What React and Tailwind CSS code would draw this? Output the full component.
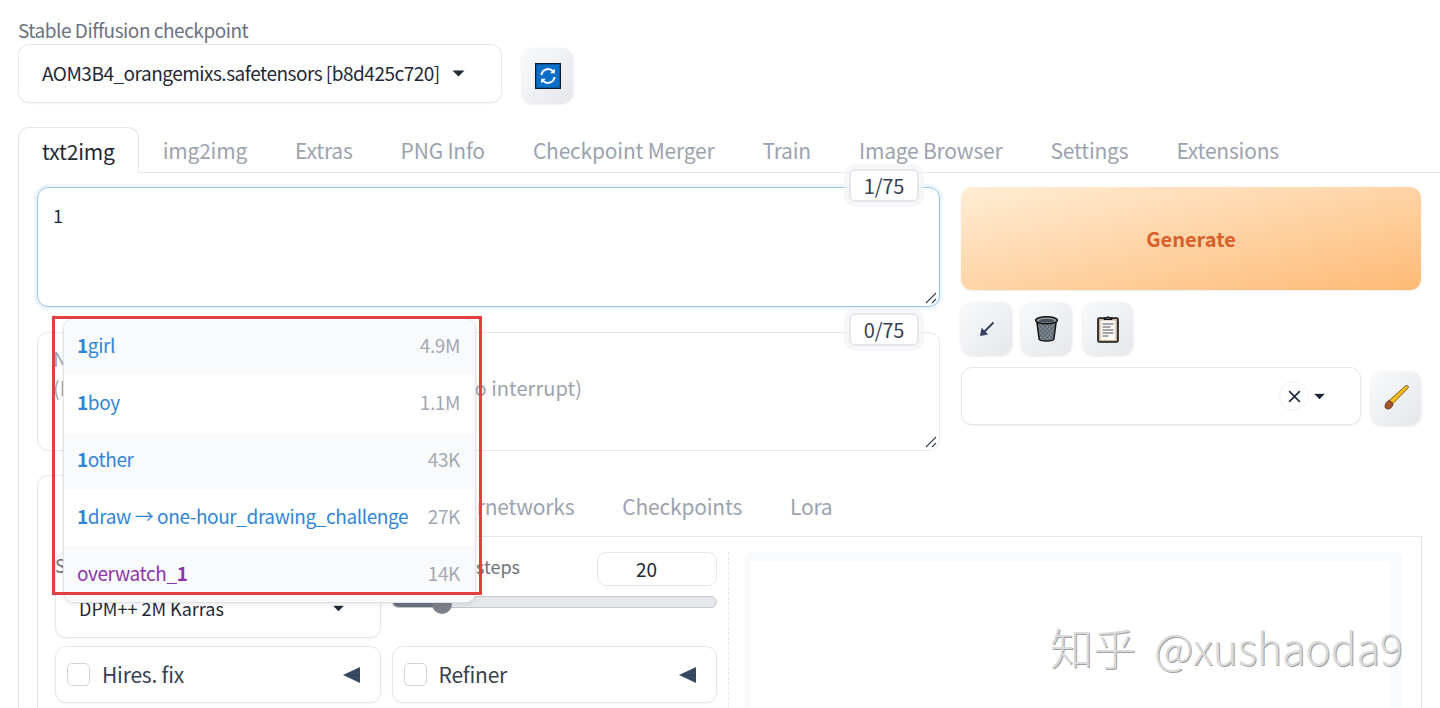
const FONT = "font-['Noto_Sans_CJK_SC','Noto_Sans',sans-serif]";

function Caret({ className = "" }) {
  return (
    <svg width="13" height="7" viewBox="0 0 13 7" className={"shrink-0 " + className}>
      <path d="M0.5 0.5h12L6.5 6.5z" fill="#1f2937" />
    </svg>
  );
}

function IconButton({ className = "", children }) {
  return (
    <div className={"flex shrink-0 items-center justify-center rounded-[11px] bg-gradient-to-br from-[#f9fafb] to-[#e5e7eb] shadow-[0_1px_3px_rgba(0,0,0,0.12)] " + className}>
      {children}
    </div>
  );
}

function RefreshIcon() {
  return (
    <svg width="26" height="26" viewBox="0 0 26 26">
      <rect x="0.5" y="0.5" width="25" height="25" fill="#0b6fc9" stroke="#0b1a2a" strokeWidth="1.5" />
      <path d="M6.5 12a6.6 6.6 0 0 1 11.5-3.6" fill="none" stroke="#fff" strokeWidth="2" />
      <path d="M19.8 5.6v4.6h-4.6z" fill="#fff" />
      <path d="M19.5 14a6.6 6.6 0 0 1-11.5 3.6" fill="none" stroke="#fff" strokeWidth="2" />
      <path d="M6.2 20.4v-4.6h4.6z" fill="#fff" />
    </svg>
  );
}

function ArrowIcon() {
  return (
    <svg width="18" height="18" viewBox="0 0 18 18">
      <path d="M15.5 2.5L6 12" stroke="#374263" strokeWidth="2" fill="none" />
      <path d="M2 16l1.6-8.2 6.6 6.6z" fill="#374263" />
    </svg>
  );
}

function TrashIcon() {
  return (
    <svg width="27" height="27" viewBox="0 0 24 26">
      <defs>
        <pattern id="mesh" width="3" height="3" patternUnits="userSpaceOnUse" patternTransform="rotate(45)">
          <rect width="3" height="3" fill="#7d8891" />
          <path d="M0 0h3M0 0v3" stroke="#3f4850" strokeWidth="0.8" />
        </pattern>
      </defs>
      <path d="M2.5 5l2.4 18.2c.2 1.2 3.4 1.8 7.1 1.8s6.9-.6 7.1-1.8L21.5 5z" fill="url(#mesh)" stroke="#111" strokeWidth="1.4" />
      <ellipse cx="12" cy="5" rx="10.4" ry="3.4" fill="#9aa4ac" stroke="#111" strokeWidth="1.4" />
      <ellipse cx="12" cy="5.4" rx="7.6" ry="1.9" fill="#47505a" />
    </svg>
  );
}

function ClipboardIcon() {
  return (
    <svg width="22" height="28" viewBox="0 0 22 28">
      <rect x="1" y="3" width="20" height="24" rx="1.6" fill="#c9b39a" stroke="#111" strokeWidth="1.6" />
      <rect x="3.5" y="5.5" width="15" height="19.5" fill="#fbf8f3" />
      <path d="M7 4.5V3h2.4a1.7 1.7 0 0 1 3.2 0H15v1.5z" fill="#4b5563" stroke="#111" strokeWidth="1" />
      <path d="M5.5 9h11M5.5 12h8M5.5 15h11M5.5 18h11M5.5 21h6" stroke="#4b5563" strokeWidth="1.1" />
    </svg>
  );
}

function BrushIcon() {
  return (
    <svg width="28" height="28" viewBox="0 0 28 28">
      <path d="M24 1.5c1.2-.5 2.8 1 2.3 2.3L11 19.5l-3.6-3.2z" fill="#f6bd1f" stroke="#8a5d10" strokeWidth="1" />
      <path d="M7.2 16.4l3.8 3.4c-.2 2.9-2.2 5-4.9 5.2-2 .2-3.3-1.3-3-3.1.4-2.7 1.8-4.7 4.1-5.5z" fill="#a4552a" stroke="#5a2c12" strokeWidth="0.8" />
    </svg>
  );
}

function Resizer() {
  return (
    <svg width="12" height="12" viewBox="0 0 12 12" className="absolute right-[2px] bottom-[2px]">
      <path d="M1 11L11 1M7 11l4-4" stroke="#374151" strokeWidth="1.1" fill="none" />
    </svg>
  );
}

function TokenCount({ className = "", children }) {
  return (
    <div className={"absolute z-10 right-[20px] flex h-[33px] w-[70px] items-center justify-center rounded-[6px] border-[2px] border-[#e5e7eb] bg-white text-[20px] tracking-[-0.2px] text-[#374151] shadow-[0_0_0_5px_rgba(243,244,246,0.7)] " + className}>
      {children}
    </div>
  );
}

function Suggest({ alt, strong, pre, rest, count, purple, height }) {
  return (
    <div className={"flex items-center justify-between whitespace-nowrap pb-[3px] pl-[13px] pr-[15px] text-[19px] tracking-[-0.4px] " + height + " " + (alt ? "bg-[#f9fafb]" : "bg-white")}>
      <span className={purple ? "text-[#8e35ae]" : "text-[#2f86d8]"}>
        {pre}
        <b className="font-bold">{strong}</b>
        {rest}
      </span>
      <span className="text-[#a3a9b3]">{count}</span>
    </div>
  );
}

function Accordion({ label }) {
  return (
    <div className="flex h-[57px] flex-1 items-center rounded-[11px] border border-[#e5e7eb] bg-white pl-[11px] pr-[20px] shadow-[0_1px_2px_rgba(0,0,0,0.05)]">
      <div className="h-[23px] w-[23px] rounded-[5px] border border-[#d1d5db] bg-white" />
      <span className="ml-[12px] flex-1 text-[21px] tracking-[-0.2px] text-[#374151]">{label}</span>
      <svg width="17" height="16" viewBox="0 0 17 16"><path d="M17 0v16L0 8z" fill="#374a63" /></svg>
    </div>
  );
}

export default function App() {
  const tabs = ["img2img", "Extras", "PNG Info", "Checkpoint Merger", "Train", "Image Browser", "Settings", "Extensions"];
  return (
    <div className={"relative h-[708px] w-[1440px] overflow-hidden bg-white " + FONT}>
      {/* Checkpoint row */}
      <div className="flex items-end gap-[20px] pl-[18px] pt-[17px]">
        <div className="w-[484px]">
          <div className="h-[27px] text-[19px] leading-[25px] tracking-[-0.47px] text-[#6b7280]">Stable Diffusion checkpoint</div>
          <div className="flex h-[59px] items-center whitespace-nowrap rounded-[11px] border border-[#e5e7eb] bg-white pl-[23px] shadow-[0_1px_2px_rgba(0,0,0,0.05)]">
            <span className="text-[19px] tracking-[-0.5px] text-[#1f2937]">AOM3B4_orangemixs.safetensors [b8d425c720]</span>
            <Caret className="ml-[12px]" />
          </div>
        </div>
        <IconButton className="h-[55px] w-[51px]"><RefreshIcon /></IconButton>
      </div>

      {/* Main tabs */}
      <div className="mt-[24px] flex h-[45px] pl-[18px] text-[21px] tracking-[-0.2px] text-[#9ca3af]">
        <div className="z-10 flex h-[46px] items-center rounded-t-[11px] border border-b-0 border-[#e5e7eb] bg-white px-[23px] pt-[2px] text-[#1f2937]">txt2img</div>
        {tabs.map((t) => (
          <div key={t} className="flex h-[45px] items-center px-[24px] pt-[2px]">{t}</div>
        ))}
      </div>

      {/* Main panel */}
      <div className="ml-[18px] border-l border-t border-[#e5e7eb] pl-[18px] pr-[18px] pt-[14px]">
        <div className="flex gap-[21px]">
          <div className="flex w-[903px] flex-col gap-[25px]">
            <div className="relative h-[120px] rounded-[11px] border border-[#93c5e8] bg-white px-[15px] py-[15px] text-[18px] leading-[24px] text-[#1f2937] shadow-[0_0_0_3px_rgba(219,234,254,0.45)]">
              1
              <Resizer />
              <TokenCount className="top-[-19px]">1/75</TokenCount>
            </div>
            <div className="relative h-[119px] rounded-[11px] border border-[#e5e7eb] bg-white px-[15px] py-[11px] text-[20px] leading-[29px] tracking-[0.07px] text-[#9ca3af]">
              <div>Negative prompt</div>
              <div>(Press Ctrl+Enter to generate, Ctrl+Alt+Enter to interrupt)</div>
              <Resizer />
              <TokenCount className="top-[-20px]">0/75</TokenCount>
            </div>
          </div>
          <div className="w-[460px]">
            <div className="flex h-[103px] items-center justify-center rounded-[11px] bg-gradient-to-br from-[#ffedd5] to-[#fdba74] text-[20px] font-semibold text-[#d9602a] shadow-[0_1px_2px_rgba(0,0,0,0.08)]">Generate</div>
            <div className="mt-[12px] flex h-[53px] gap-[9px]">
              <IconButton className="h-[53px] w-[51px]"><ArrowIcon /></IconButton>
              <IconButton className="h-[53px] w-[51px]"><TrashIcon /></IconButton>
              <IconButton className="ml-[2px] h-[53px] w-[50px]"><ClipboardIcon /></IconButton>
            </div>
            <div className="mt-[12px] flex items-end gap-[10px]">
              <div className="flex h-[58px] w-[400px] items-center justify-end rounded-[11px] border border-[#e5e7eb] bg-white pr-[34px] shadow-[0_1px_2px_rgba(0,0,0,0.05)]">
                <div className="flex h-[30px] w-[30px] items-center justify-center rounded-full border border-[#eef0f2] bg-white">
                  <svg width="15" height="15" viewBox="0 0 14 14"><path d="M2 2l10 10M12 2L2 12" stroke="#1f2937" strokeWidth="1.5" /></svg>
                </div>
                <Caret className="ml-[4px] scale-90" />
              </div>
              <IconButton className="h-[54px] w-[50px]"><BrushIcon /></IconButton>
            </div>
          </div>
        </div>

        {/* Lower panel */}
        <div className="mt-[24px]">
          <div className="flex h-[61px] text-[21px] tracking-[-0.2px] text-[#9ca3af]">
            <div className="z-10 flex h-[62px] items-center rounded-t-[11px] border border-b-0 border-[#e5e7eb] bg-white pl-[25px] pr-[21px] pt-[1px] text-[#1f2937]">Generation</div>
            <div className="flex items-center px-[24px] pt-[2px]">Textual Inversion</div>
            <div className="flex items-center px-[24px] pt-[2px]">Hypernetworks</div>
            <div className="flex items-center px-[24px] pt-[2px]">Checkpoints</div>
            <div className="flex items-center px-[24px] pt-[2px]">Lora</div>
          </div>
          <div className="flex h-[300px] border border-[#e5e7eb] pl-[17px] pr-[17px] pt-[15px]">
            <div className="w-[662px] shrink-0">
              <div className="flex gap-[11px]">
                <div className="h-[86px] w-[326px] rounded-[11px] border border-[#e5e7eb] bg-white pl-[23px] shadow-[0_1px_2px_rgba(0,0,0,0.05)]">
                  <div className="ml-[-24px] text-[18px] leading-[24px] text-[#6b7280]">Sampling method</div>
                  <div className="mt-[19px] flex items-center pr-[35px] text-[18px] leading-[24px] text-[#1f2937]">
                    <span className="flex-1">DPM++ 2M Karras</span>
                    <Caret className="scale-90" />
                  </div>
                </div>
                <div className="w-[325px]">
                  <div className="flex h-[34px] items-center justify-between">
                    <span className="mt-[-6px] text-[18px] text-[#6b7280]">Sampling steps</span>
                    <div className="flex h-[34px] w-[120px] items-center rounded-[9px] border border-[#e5e7eb] bg-white pl-[38px] text-[19px] text-[#1f2937]">20</div>
                  </div>
                  <div className="relative mt-[10px] h-[12px] rounded-full border border-[#c4c8ce] bg-[#e5e7eb]">
                    <div className="h-full w-[49px] rounded-l-full bg-[#6b7280]" />
                    <div className="absolute left-[39px] top-[-3px] h-[20px] w-[20px] rounded-full bg-[#7b818a]" />
                  </div>
                </div>
              </div>
              <div className="mt-[8px] flex gap-[11px]">
                <Accordion label="Hires. fix" />
                <Accordion label="Refiner" />
              </div>
            </div>
            <div className="ml-[11px] h-full border-l border-dashed border-[#e5e7eb]" />
            <div className="ml-[15px] h-[300px] w-[658px] shrink-0 rounded-t-[8px] bg-[#f8fafc] pl-[7px] pr-[11px] pt-[9px]">
              <div className="h-full bg-white" />
            </div>
          </div>
        </div>
      </div>

      {/* Autocomplete popup */}
      <div className="absolute left-[63px] top-[318px] z-20 flex h-[285px] w-[413px] flex-col overflow-hidden rounded-[11px] border border-[#dfe3e8] bg-white shadow-[0_2px_4px_rgba(0,0,0,0.08)]">
        <Suggest alt strong="1" rest="girl" count="4.9M" height="h-[56px] shrink-0" />
        <Suggest strong="1" rest="boy" count="1.1M" height="h-[58px] shrink-0" />
        <Suggest alt strong="1" rest="other" count="43K" height="h-[56px] shrink-0" />
        <Suggest strong="1" rest="draw → one-hour_drawing_challenge" count="27K" height="h-[57px] shrink-0" />
        <Suggest alt purple pre="overwatch_" strong="1" count="14K" height="h-[57px] shrink-0" />
      </div>
      <div className="absolute left-[52px] top-[316px] z-30 h-[279px] w-[430px] border-[3px] border-[#e04040]" />

      {/* Watermark */}
      <div className="absolute left-[1050px] top-[616px] z-30 flex gap-[18px] whitespace-nowrap text-[43px] font-light leading-[60px] text-[#dadada] [text-shadow:1px_1px_0_#a0a0a0]">
        <span>知乎</span>
        <span className="tracking-[-0.2px]">@xushaoda9</span>
      </div>
    </div>
  );
}
